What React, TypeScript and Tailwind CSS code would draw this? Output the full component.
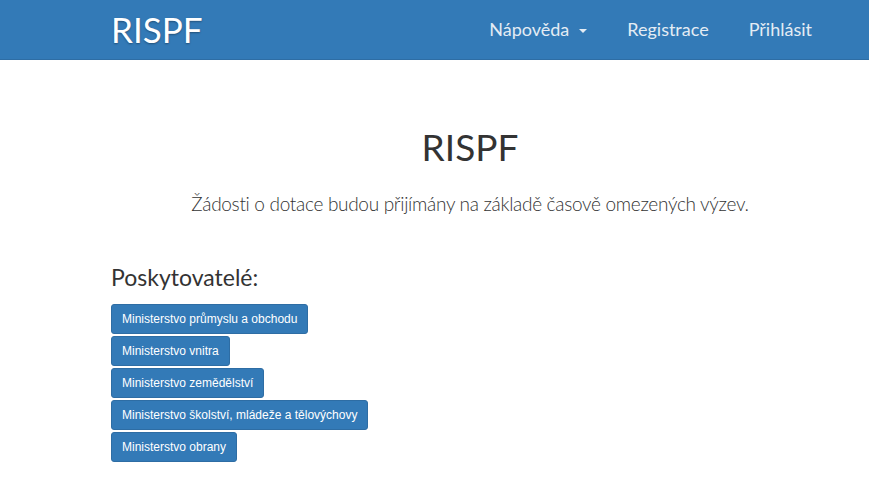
import React from "react";

const providers = [
  "Ministerstvo průmyslu a obchodu",
  "Ministerstvo vnitra",
  "Ministerstvo zemědělství",
  "Ministerstvo školství, mládeže a tělovýchovy",
  "Ministerstvo obrany",
];

const App = () => {
  return (
    <div className="min-h-screen bg-white font-['Lato',sans-serif] text-[#333]">
      <nav className="h-[60px] bg-[#337ab7] border-b border-[#2e6da4]">
        <div className="flex h-full items-center justify-between pl-[111px] pr-[57px]">
          <a className="text-[35px] font-normal text-white [text-shadow:0_1px_2px_rgba(0,0,0,0.35)]">RISPF</a>
          <ul className="flex h-full items-center text-[18px] text-[#e4ecf4]">
            <li className="flex items-center px-[20px]">
              Nápověda
              <span className="ml-[10px] mt-[2px] h-0 w-0 border-x-[4.5px] border-t-[4.5px] border-x-transparent border-t-[#e4ecf4]" />
            </li>
            <li className="px-[20px]">Registrace</li>
            <li className="pl-[20px]">Přihlásit</li>
          </ul>
        </div>
      </nav>

      <main className="pl-[111px] pr-[40px]">
        <section className="pt-[67px] pb-[40px] text-center">
          <h1 className="text-[37px] leading-[1.1] font-normal">RISPF</h1>
          <p className="mt-[22px] text-[19px] tracking-[-0.3px] font-light">
            Žádosti o dotace budou přijímány na základě časově omezených výzev.
          </p>
        </section>

        <section>
          <h3 className="mt-[7px] text-[23px] leading-[1.1] font-normal">Poskytovatelé:</h3>
          <div className="mt-[14px] flex flex-col items-start gap-[2px]">
            {providers.map((p) => (
              <button
                key={p}
                className="h-[30px] rounded-[3px] border border-[#2e6da4] bg-[#337ab7] px-[10px] font-['Liberation_Sans',Arial,sans-serif] text-[12px] text-white"
              >
                {p}
              </button>
            ))}
          </div>
        </section>
      </main>
    </div>
  );
};

export default App;
